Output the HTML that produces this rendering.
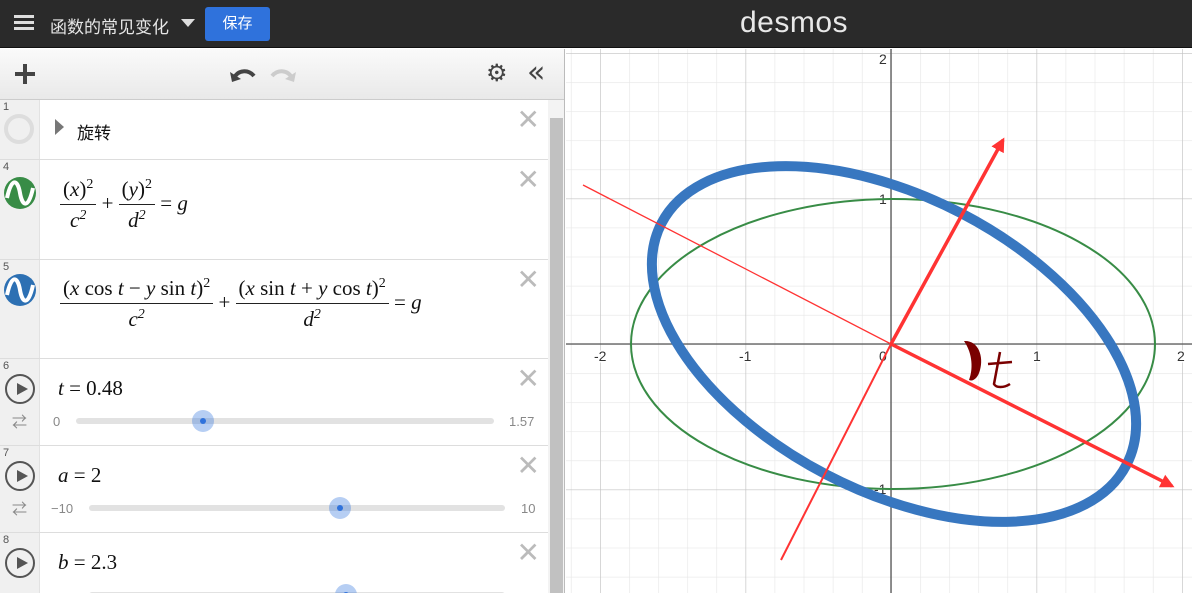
<!DOCTYPE html>
<html><head><meta charset="utf-8"><style>
*{margin:0;padding:0;box-sizing:border-box}
html,body{width:1192px;height:593px;overflow:hidden}
body{background:#fff;font-family:"Liberation Sans","Noto Sans CJK SC",sans-serif;position:relative}
#hdr{position:absolute;left:0;top:0;width:1192px;height:48px;background:#2a2a2a;border-bottom:1px solid #111}
.title{position:absolute;left:50px;top:13px;color:#e6e6e6;font-size:17px}
.save{position:absolute;left:205px;top:7px;width:65px;height:34px;background:#2f72dc;border-radius:3px;color:#fff;font-size:15px;text-align:center;line-height:34px}
.logo{position:absolute;left:740px;top:6px;color:#e8e8e8;font-size:30px;letter-spacing:0.5px}
#panel{position:absolute;left:0;top:49px;width:565px;height:544px;background:#fff;border-right:1px solid #bbb;overflow:hidden}
#tb{position:absolute;left:0;top:0;width:565px;height:51px;background:linear-gradient(#fafafa,#e9e9e9);border-bottom:1px solid #ccc}
.row{position:absolute;left:0;width:548px;border-bottom:1px solid #ddd;background:#fff}
.gut{position:absolute;left:0;top:0;bottom:0;width:40px;background:#f0f0f0;border-right:1px solid #e2e2e2}
.num{position:absolute;left:3px;top:1px;font-size:11px;color:#555}
.x{position:absolute;right:8px;top:6px;font-size:28px;color:#bbb;font-family:"DejaVu Sans",sans-serif;line-height:28px}
.m{font-family:"Liberation Serif",serif;font-size:21px;color:#111;position:absolute}
.i{font-style:italic}
.frac{display:inline-block;vertical-align:middle;text-align:center}
.frac .n{display:block;border-bottom:1px solid #222;padding:0 3px 2px}
.frac .d{display:block;padding-top:3px}
sup{font-size:14px}
.play{position:absolute;left:5px;width:30px;height:30px;border:2px solid #555;border-radius:50%}
.play:after{content:"";position:absolute;left:10px;top:7px;border-left:11px solid #555;border-top:6px solid transparent;border-bottom:6px solid transparent}
.rep{position:absolute;left:12px;font-size:15px;color:#888}
.track{position:absolute;height:6px;background:#e2e2e2;border-radius:3px}
.knob{position:absolute;width:22px;height:22px;border-radius:50%;background:rgba(47,114,220,0.35)}
.knob:after{content:"";position:absolute;left:8px;top:8px;width:6px;height:6px;border-radius:50%;background:#2f72dc}
.lab{position:absolute;font-size:13px;color:#888}
#sb{position:absolute;left:548px;top:51px;width:17px;height:493px;background:#f3f3f3}
#sb div{position:absolute;left:2px;top:18px;width:13px;height:480px;background:#c1c1c1}
</style></head><body>
<div id="hdr">
 <div style="position:absolute;left:14px;top:15px;width:20px;height:3px;background:#ddd;box-shadow:0 6px 0 #ddd,0 12px 0 #ddd"></div>
 <div class="title">函数的常见变化</div>
 <div style="position:absolute;left:181px;top:19px;border-top:8px solid #ddd;border-left:7px solid transparent;border-right:7px solid transparent"></div>
 <div class="save">保存</div>
 <div class="logo">desmos</div>
</div>

<svg style="position:absolute;left:566px;top:49px" width="626" height="544" viewBox="566 49 626 544">
<defs>
<pattern id="mn" patternUnits="userSpaceOnUse" x="891" y="344" width="29.1" height="29.1"><path d="M0 0V29.1M0 0H29.1" stroke="#e6e6e6" stroke-width="1.2" fill="none"/></pattern>
<pattern id="mj" patternUnits="userSpaceOnUse" x="891" y="344" width="145.5" height="145.5"><path d="M0 0V145.5M0 0H145.5" stroke="#c4c4c4" stroke-width="1.3" fill="none"/></pattern>
<marker id="ar" viewBox="0 0 10 10" refX="8" refY="5" markerWidth="4" markerHeight="4" orient="auto"><path d="M0 0L10 5L0 10z" fill="#f33"/></marker>
</defs>
<rect x="566" y="49" width="626" height="544" fill="#fff"/>
<rect x="566" y="49" width="626" height="544" fill="url(#mn)"/>
<rect x="566" y="49" width="626" height="544" fill="url(#mj)"/>
<line x1="891" y1="49" x2="891" y2="593" stroke="#555" stroke-width="1.3"/>
<line x1="566" y1="344" x2="1192" y2="344" stroke="#555" stroke-width="1.3"/>
<g font-family="Liberation Sans" font-size="14" fill="#333" stroke="#fff" stroke-width="3" paint-order="stroke">
<text x="594" y="361">-2</text><text x="739" y="361">-1</text><text x="879" y="361">0</text><text x="1033" y="361">1</text><text x="1177" y="361">2</text>
<text x="879" y="64">2</text><text x="879" y="204">1</text><text x="874" y="494">-1</text>
</g>
<ellipse cx="893" cy="344" rx="262" ry="145" fill="none" stroke="#388c46" stroke-width="2"/>
<ellipse cx="894" cy="344" rx="262" ry="147" transform="rotate(27.5 894 344)" fill="none" stroke="#3877c0" stroke-width="10"/>
<line x1="583" y1="185" x2="891" y2="344" stroke="#f33" stroke-width="1.3"/>
<line x1="891" y1="344" x2="1172" y2="486" stroke="#f33" stroke-width="3.5" marker-end="url(#ar)"/>
<line x1="781" y1="560" x2="891" y2="344" stroke="#f33" stroke-width="2"/>
<line x1="891" y1="344" x2="1003" y2="140" stroke="#f33" stroke-width="3.5" marker-end="url(#ar)"/>
<path d="M964 341 C978 340 984 356 980 370 C978 378 973 382 969 380 C973 370 973 354 964 341z" fill="#7a0000"/>
<path d="M1000 352 L994 384 C996 388 1004 388 1010 384 M988 364 L1012 362" stroke="#7a0000" stroke-width="2.5" fill="none"/>
</svg>

<div id="panel">
 <div id="tb">
  <div style="position:absolute;left:15px;top:23px;width:20px;height:4px;background:#444"></div>
  <div style="position:absolute;left:23px;top:15px;width:4px;height:20px;background:#444"></div>
  <svg style="position:absolute;left:228px;top:15px" width="70" height="22"><path d="M6 14 C10 6 20 5 26 12" stroke="#444" stroke-width="4" fill="none"/><path d="M2 8 L4 18 L13 15z" fill="#444"/><path d="M64 14 C60 6 50 5 44 12" stroke="#ccc" stroke-width="4" fill="none"/><path d="M68 8 L66 18 L57 15z" fill="#ccc"/></svg>
  <div style="position:absolute;left:486px;top:10px;font-size:24px;color:#444;font-family:'DejaVu Sans'">⚙</div>
  <div style="position:absolute;left:527px;top:6px;font-size:30px;color:#444;font-family:'DejaVu Sans'">«</div>
 </div>
 <div id="sb"><div></div></div>

 <div class="row" style="top:51px;height:60px"><div class="gut"></div><div class="num">1</div>
  <div style="position:absolute;left:4px;top:14px;width:30px;height:30px;border-radius:50%;border:4px solid #ddd"></div>
  <div style="position:absolute;left:55px;top:19px;border-left:9px solid #777;border-top:8px solid transparent;border-bottom:8px solid transparent"></div>
  <div style="position:absolute;left:77px;top:19px;font-size:17px;color:#111">旋转</div>
  <div class="x">✕</div></div>

 <div class="row" style="top:111px;height:100px"><div class="gut"></div><div class="num">4</div>
  <svg style="position:absolute;left:4px;top:17px" width="32" height="32"><circle cx="16" cy="16" r="16" fill="#388c46"/><path d="M3 21 C8 -2 14 4 16 16 C18 28 24 34 29 11" stroke="#fff" stroke-width="4" fill="none"/></svg>
  <div class="m" style="left:60px;top:17px"><span class="frac"><span class="n">(<span class="i">x</span>)<sup>2</sup></span><span class="d i">c<sup>2</sup></span></span> + <span class="frac"><span class="n">(<span class="i">y</span>)<sup>2</sup></span><span class="d i">d<sup>2</sup></span></span> = <span class="i">g</span></div>
  <div class="x">✕</div></div>

 <div class="row" style="top:211px;height:99px"><div class="gut"></div><div class="num">5</div>
  <svg style="position:absolute;left:4px;top:14px" width="32" height="32"><circle cx="16" cy="16" r="16" fill="#2d70b3"/><path d="M3 21 C8 -2 14 4 16 16 C18 28 24 34 29 11" stroke="#fff" stroke-width="4" fill="none"/></svg>
  <div class="m" style="left:60px;top:16px"><span class="frac"><span class="n">(<span class="i">x</span> cos <span class="i">t</span> − <span class="i">y</span> sin <span class="i">t</span>)<sup>2</sup></span><span class="d i">c<sup>2</sup></span></span> + <span class="frac"><span class="n">(<span class="i">x</span> sin <span class="i">t</span> + <span class="i">y</span> cos <span class="i">t</span>)<sup>2</sup></span><span class="d i">d<sup>2</sup></span></span> = <span class="i">g</span></div>
  <div class="x">✕</div></div>

 <div class="row" style="top:310px;height:87px"><div class="gut"></div><div class="num">6</div>
  <div class="play" style="top:15px"></div><div class="rep" style="top:52px">⇄</div>
  <div class="m" style="left:58px;top:17px"><span class="i">t</span> = 0.48</div>
  <div class="lab" style="left:53px;top:55px">0</div><div class="track" style="left:76px;top:59px;width:418px"></div><div class="knob" style="left:192px;top:51px"></div><div class="lab" style="left:509px;top:55px">1.57</div>
  <div class="x">✕</div></div>

 <div class="row" style="top:397px;height:87px"><div class="gut"></div><div class="num">7</div>
  <div class="play" style="top:15px"></div><div class="rep" style="top:52px">⇄</div>
  <div class="m" style="left:58px;top:17px"><span class="i">a</span> = 2</div>
  <div class="lab" style="left:51px;top:55px">−10</div><div class="track" style="left:89px;top:59px;width:416px"></div><div class="knob" style="left:329px;top:51px"></div><div class="lab" style="left:521px;top:55px">10</div>
  <div class="x">✕</div></div>

 <div class="row" style="top:484px;height:87px"><div class="gut"></div><div class="num">8</div>
  <div class="play" style="top:15px"></div>
  <div class="m" style="left:58px;top:17px"><span class="i">b</span> = 2.3</div>
  <div class="track" style="left:89px;top:59px;width:416px"></div><div class="knob" style="left:335px;top:51px"></div>
  <div class="x">✕</div></div>
</div>
</body></html>
